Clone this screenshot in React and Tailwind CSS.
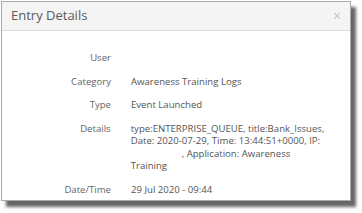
import React from 'react'

const ROWS = [
  { label: 'User', value: '' },
  { label: 'Category', value: 'Awareness Training Logs' },
  { label: 'Type', value: 'Event Launched' },
]

const App = () => {
  return (
    <div className="w-[362px] h-[213px] bg-white pt-[1px] pl-[1px]" style={{ fontFamily: '"Open Sans", sans-serif' }}>
      <div className="w-[350px] h-[200px] bg-white border border-[#a9a9a9] shadow-[5px_6px_3px_rgba(0,0,0,0.6)] flex flex-col">
        {/* header */}
        <div className="h-[29px] bg-[#f4f4f4] border-b border-[#dcdcdc] flex items-center justify-between pl-[9px] pr-[9px]">
          <span className="text-[13px] text-[#5a5a5a]">Entry Details</span>
          <span className="text-[14px] text-[#c4c4c4] leading-none">×</span>
        </div>

        {/* body */}
        <div className="flex-1 pt-[20px] text-[9.6px] text-[#555]">
          {ROWS.map((r) => (
            <div key={r.label} className="flex h-[23.5px]">
              <div className="w-[109px] text-right text-[#666]">{r.label}</div>
              <div className="pl-[20px]">{r.value}</div>
            </div>
          ))}
          <div className="flex">
            <div className="w-[109px] text-right text-[#666]">Details</div>
            <div className="pl-[20px] w-[240px] leading-[12.5px] pt-[1px]">
              <div>type:ENTERPRISE_QUEUE, title:Bank_Issues,</div>
              <div>Date: 2020-07-29, Time: 13:44:51+0000, IP:</div>
              <div className="pl-[51px]">, Application: Awareness</div>
              <div>Training</div>
            </div>
          </div>
          <div className="flex mt-[10px]">
            <div className="w-[109px] text-right text-[#666]">Date/Time</div>
            <div className="pl-[20px]">29 Jul 2020 - 09:44</div>
          </div>
        </div>
      </div>
    </div>
  )
}

export default App
